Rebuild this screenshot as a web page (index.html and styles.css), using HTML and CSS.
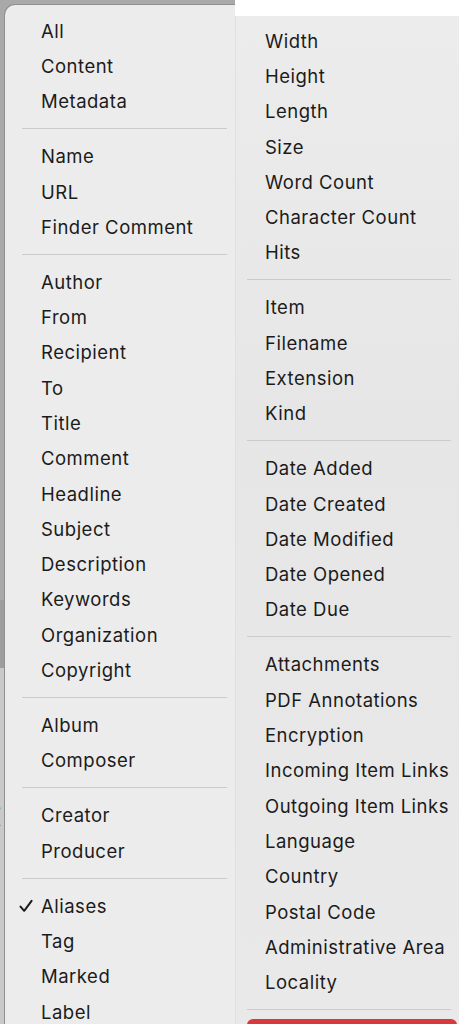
FILE: index.html
```html
<!DOCTYPE html>
<html lang="en">
<head>
    <meta charset="UTF-8">
    <meta name="viewport" content="width=device-width, initial-scale=1.0">
    <title>Search Fields Menu</title>
    <link rel="stylesheet" href="styles.css">
</head>
<body>
    <div class="desk">
        <div class="left-col">
            <div class="behind">
                <span class="behind-glyph">(</span>
            </div>
            <ul class="menu menu-left">
                <li>All</li>
                <li>Content</li>
                <li>Metadata</li>
                <li class="sep"></li>
                <li>Name</li>
                <li>URL</li>
                <li>Finder Comment</li>
                <li class="sep"></li>
                <li>Author</li>
                <li>From</li>
                <li>Recipient</li>
                <li>To</li>
                <li>Title</li>
                <li>Comment</li>
                <li>Headline</li>
                <li>Subject</li>
                <li>Description</li>
                <li>Keywords</li>
                <li>Organization</li>
                <li>Copyright</li>
                <li class="sep"></li>
                <li>Album</li>
                <li>Composer</li>
                <li class="sep"></li>
                <li>Creator</li>
                <li>Producer</li>
                <li class="sep"></li>
                <li class="checked">
                    <svg class="check" viewBox="0 0 14 14" width="14" height="14">
                        <path d="M1.5 7.6 L5.2 11.8 L12.6 1.8" fill="none" stroke="#1b1b1b" stroke-width="2" stroke-linecap="round" stroke-linejoin="round"/>
                    </svg>
                    Aliases
                </li>
                <li>Tag</li>
                <li>Marked</li>
                <li>Label</li>
            </ul>
        </div>
        <div class="right-col">
            <ul class="menu menu-right">
                <li>Width</li>
                <li>Height</li>
                <li>Length</li>
                <li>Size</li>
                <li>Word Count</li>
                <li>Character Count</li>
                <li>Hits</li>
                <li class="sep"></li>
                <li>Item</li>
                <li>Filename</li>
                <li>Extension</li>
                <li>Kind</li>
                <li class="sep"></li>
                <li>Date Added</li>
                <li>Date Created</li>
                <li>Date Modified</li>
                <li>Date Opened</li>
                <li>Date Due</li>
                <li class="sep"></li>
                <li>Attachments</li>
                <li>PDF Annotations</li>
                <li>Encryption</li>
                <li>Incoming Item Links</li>
                <li>Outgoing Item Links</li>
                <li>Language</li>
                <li>Country</li>
                <li>Postal Code</li>
                <li>Administrative Area</li>
                <li>Locality</li>
                <li class="sep"></li>
                <li class="selected"></li>
            </ul>
        </div>
    </div>
</body>
</html>
```

FILE: styles.css
```css
body {
    margin: 0;
    background-color: #fff;
    font-family: Inter, "Noto Sans", sans-serif;
    color: #1b1b1b;
}
.desk {
    display: flex;
    height: 1024px;
    overflow: hidden;
}
.left-col {
    display: flex;
    width: 235px;
    padding-top: 4px;
    background-color: #a9a9a9;
    box-sizing: border-box;
}
.behind {
    position: relative;
    width: 4px;
    background: linear-gradient(#a9a9a9 600px, #9d9d9d 600px, #9d9d9d 668px, #c9c9c9 668px);
    margin-top: -4px;
}
.behind-glyph {
    position: absolute;
    top: 804px;
    left: -6px;
    font-size: 20px;
    color: #222;
}
.right-col {
    width: 235px;
    padding-top: 16px;
    background-color: #fff;
    box-sizing: border-box;
}
.menu {
    list-style: none;
    margin: 0;
    font-size: 18.5px;
    letter-spacing: 0.5px;
}
.menu li {
    display: flex;
    align-items: center;
    height: 35.3px;
    white-space: nowrap;
}
.menu li.sep {
    height: 1px;
    margin: 9.35px 0;
    background-color: #cbcbcb;
}
.menu-left {
    flex: 1;
    padding: 8px 0 0 36px;
    background-color: #ececec;
    border-radius: 11px 0 0 0;
    border-left: 1px solid #8f8f8f;
    border-top: 1px solid #8f8f8f;
}
.menu-left li.sep {
    margin-left: -19px;
    margin-right: 8px;
}
.menu-left li.checked {
    position: relative;
}
.check {
    position: absolute;
    left: -22px;
    top: 11px;
}
.menu-right {
    width: 224px;
    height: 1008px;
    padding: 7px 0 0 29px;
    box-sizing: border-box;
    background: linear-gradient(#ececec, #e6e6e6 40%, #e9e9e9);
    border-left: 1px solid #e0e0e0;
}
.menu-right li.sep {
    margin-left: -18px;
    margin-right: 8px;
}
.menu-right li.selected {
    margin: 3px 2px 0 -18px;
    background-color: #d9393c;
    border-radius: 6px;
}
```
